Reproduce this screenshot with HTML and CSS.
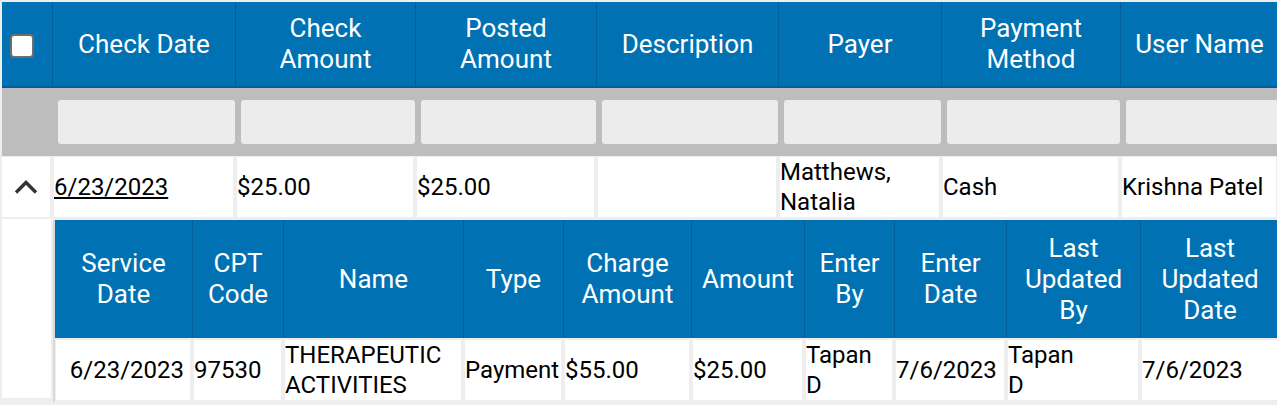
FILE: index.html
```html
<!DOCTYPE html>
<html lang="en">

<head>
    <meta charset="UTF-8">
    <meta name="viewport" content="width=device-width, initial-scale=1.0">
    <title>Payments</title>
    <link rel="stylesheet" href="styles.css">
</head>

<body>
    <table class="grid">
        <colgroup>
            <col class="w-select">
            <col class="w-183">
            <col class="w-180">
            <col class="w-181">
            <col class="w-182">
            <col class="w-163">
            <col class="w-179">
            <col class="w-158">
        </colgroup>
        <thead>
            <tr class="head">
                <th class="select"><input type="checkbox" class="check"></th>
                <th>Check Date</th>
                <th>Check Amount</th>
                <th>Posted Amount</th>
                <th>Description</th>
                <th>Payer</th>
                <th>Payment Method</th>
                <th>User Name</th>
            </tr>
            <!-- filter row -->
            <tr class="filters">
                <td></td>
                <td><input type="text" class="filter"></td>
                <td><input type="text" class="filter"></td>
                <td><input type="text" class="filter"></td>
                <td><input type="text" class="filter"></td>
                <td><input type="text" class="filter"></td>
                <td><input type="text" class="filter"></td>
                <td><input type="text" class="filter"></td>
            </tr>
        </thead>
        <tbody>
            <tr class="row">
                <td class="toggle">
                    <svg width="24" height="14" viewBox="0 0 24 14">
                        <polyline points="2,12.5 12,2.5 22,12.5" fill="none" stroke="#333" stroke-width="3.4" />
                    </svg>
                </td>
                <td><a href="#" class="date-link">6/23/2023</a></td>
                <td>$25.00</td>
                <td>$25.00</td>
                <td></td>
                <td>Matthews, Natalia</td>
                <td>Cash</td>
                <td>Krishna Patel</td>
            </tr>

            <!-- expanded detail -->
            <tr class="detail">
                <td class="detail-gutter"></td>
                <td colspan="7" class="detail-body">
                    <table class="sub">
                        <colgroup>
                            <col class="w-138">
                            <col class="w-91">
                            <col class="w-180">
                            <col class="w-100">
                            <col class="w-128">
                            <col class="w-113">
                            <col class="w-90">
                            <col class="w-112">
                            <col class="w-134">
                            <col class="w-139">
                        </colgroup>
                        <thead>
                            <tr>
                                <th>Service Date</th>
                                <th>CPT Code</th>
                                <th>Name</th>
                                <th>Type</th>
                                <th>Charge Amount</th>
                                <th>Amount</th>
                                <th>Enter By</th>
                                <th>Enter Date</th>
                                <th>Last Updated By</th>
                                <th>Last Updated Date</th>
                            </tr>
                        </thead>
                        <tbody>
                            <tr>
                                <td class="right">6/23/2023</td>
                                <td>97530</td>
                                <td>THERAPEUTIC ACTIVITIES</td>
                                <td>Payment</td>
                                <td>$55.00</td>
                                <td>$25.00</td>
                                <td>Tapan<br>D</td>
                                <td>7/6/2023</td>
                                <td>Tapan<br>D</td>
                                <td>7/6/2023</td>
                            </tr>
                        </tbody>
                    </table>
                </td>
            </tr>
        </tbody>
    </table>
</body>

</html>
```

FILE: styles.css
```css
html,
body {
    overflow: hidden;
}

body {
    margin: 0;
    padding: 2px 0 0 2px;
    background-color: #eeeeee;
    font-family: Roboto, "Liberation Sans", Arial, sans-serif;
    color: #000;
}

table {
    border-collapse: separate;
    border-spacing: 0;
    table-layout: fixed;
}

.grid {
    width: 1277px;
}

.w-select { width: 51px; }
.w-183 { width: 183px; }
.w-180 { width: 180px; }
.w-181 { width: 181px; }
.w-182 { width: 182px; }
.w-163 { width: 163px; }
.w-179 { width: 179px; }
.w-158 { width: 158px; }
.w-138 { width: 138px; }
.w-91 { width: 91px; }
.w-100 { width: 100px; }
.w-128 { width: 128px; }
.w-113 { width: 113px; }
.w-90 { width: 90px; }
.w-112 { width: 112px; }
.w-134 { width: 134px; }
.w-139 { width: 139px; }

th,
td {
    box-sizing: border-box;
}

/* header cells */
th {
    background-color: #0071b2;
    color: #fff;
    font-size: 26px;
    font-weight: normal;
    line-height: 31px;
    text-align: center;
    padding: 0 8px;
    border-right: 1px solid #005e98;
}

.head th {
    height: 86px;
    border-bottom: 2px solid #005e98;
}

.head th.select {
    text-align: left;
    padding: 0 0 0 8px;
}

.check {
    appearance: none;
    -webkit-appearance: none;
    display: block;
    width: 24px;
    height: 24px;
    margin: 4px 0 0 0;
    background-color: #fff;
    border: 2px solid #6e6e6e;
    border-radius: 4px;
    box-sizing: border-box;
}

/* filter row */
.filters td {
    background-color: #bdbdbd;
    padding: 12px 1px 12px 5px;
    height: 68px;
}

.filter {
    display: block;
    width: 100%;
    height: 44px;
    border: none;
    border-radius: 3px;
    background-color: #ececec;
    box-sizing: border-box;
}

/* data rows */
.row td,
.sub td {
    background-color: #fff;
    font-size: 24px;
    line-height: 30px;
    padding: 0;
    vertical-align: middle;
    border-left: 1px solid #eeeeee;
    border-right: 3px solid #eeeeee;
    border-top: 1px solid #eeeeee;
    border-bottom: 1px solid #eeeeee;
}

.row td {
    height: 62px;
}

.row td.toggle {
    border-left: none;
    text-align: center;
}

.toggle svg {
    display: block;
    margin: 0 auto;
}

.date-link {
    color: #000;
    text-decoration: underline;
}

.detail td.detail-gutter {
    background-color: #fff;
    border-top: 1px solid #eeeeee;
    border-right: 2px solid #eeeeee;
    border-bottom: 4px solid #eeeeee;
}

.detail td.detail-body {
    padding: 2px 0 0 0;
    background-color: #eeeeee;
}

/* nested charges table */
.sub {
    width: 1226px;
    border-left: 2px solid #d9d9d9;
}

.sub th {
    height: 118px;
    padding: 0 8px;
}

.sub td {
    height: 62px;
    border-top: 2px solid #eeeeee;
    border-bottom: 2px solid #eeeeee;
}

.sub td.right {
    text-align: right;
    padding-right: 6px;
}
```
